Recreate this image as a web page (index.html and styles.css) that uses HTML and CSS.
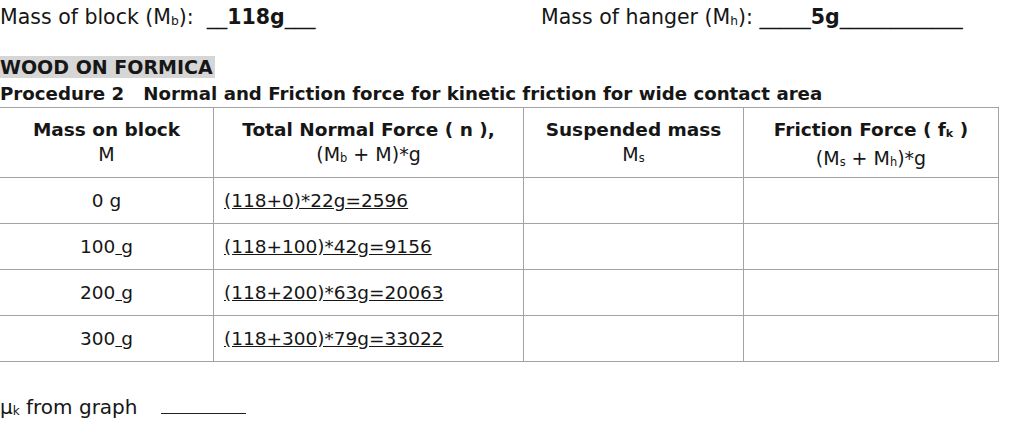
FILE: index.html
```html
<!DOCTYPE html>
<html>
<head>
<meta charset="utf-8">
<link rel="stylesheet" href="styles.css">
</head>
<body>
<div class="page">
  <div class="mass-line">
    <div class="mass-item first">Mass of block (M<span class="sub">b</span>):&nbsp; __<b>118g</b>___</div>
    <div class="mass-item">Mass of hanger (M<span class="sub">h</span>): _____<b>5g</b>____________</div>
  </div>
  <div class="heading"><span class="hl">WOOD ON FORMICA</span></div>
  <div class="procedure">Procedure 2&nbsp;&nbsp; Normal and Friction force for kinetic friction for wide contact area</div>
  <table class="data">
    <colgroup>
      <col class="c1"><col class="c2"><col class="c3"><col class="c4">
    </colgroup>
    <thead>
      <tr>
        <th><div class="t">Mass on block</div><div class="s">M</div></th>
        <th><div class="t">Total Normal Force ( n ),</div><div class="s">(M<span class="sub">b</span> + M)*g</div></th>
        <th><div class="t">Suspended mass</div><div class="s">M<span class="sub">s</span></div></th>
        <th><div class="t">Friction Force ( f<span class="sub">k</span> )</div><div class="s">(M<span class="sub">s</span> + M<span class="sub">h</span>)*g</div></th>
      </tr>
    </thead>
    <tbody>
      <tr><td class="m">0 g</td><td class="n"><u>(118+0)*22g=2596</u></td><td></td><td></td></tr>
      <tr><td class="m">100<u> g</u></td><td class="n"><u>(118+100)*42g=9156</u></td><td></td><td></td></tr>
      <tr><td class="m">200<u> g</u></td><td class="n"><u>(118+200)*63g=20063</u></td><td></td><td></td></tr>
      <tr><td class="m">300<u> g</u></td><td class="n"><u>(118+300)*79g=33022</u></td><td></td><td></td></tr>
    </tbody>
  </table>
  <div class="mu">μ<span class="sub">k</span> from graph&nbsp;&nbsp; <span class="blank"></span></div>
</div>
</body>
</html>
```

FILE: styles.css
```css
html, body {
  margin: 0;
  padding: 0;
  background: #fff;
}
.page {
  font-family: "DejaVu Sans", sans-serif;
  color: #161616;
  width: 1024px;
  height: 447px;
  overflow: hidden;
}
.sub {
  font-size: 0.6em;
  vertical-align: -0.08em;
}
.mass-line {
  display: flex;
  padding-top: 4px;
  height: 51px;
  font-size: 20.5px;
  line-height: 26px;
}
.mass-item.first {
  width: 541px;
}
.heading {
  font-weight: bold;
  font-size: 19px;
  line-height: 24px;
}
.hl {
  background: #d6d6d6;
  padding-right: 2px;
}
.procedure {
  font-weight: bold;
  font-size: 18.2px;
  line-height: 30px;
  height: 28px;
}
table.data {
  border-collapse: collapse;
  table-layout: fixed;
  width: 999px;
  margin-left: -1px;
}
col.c1 { width: 214px; }
col.c2 { width: 310px; }
col.c3 { width: 220px; }
col.c4 { width: 255px; }
table.data th, table.data td {
  border: 1px solid #a3a3a3;
  padding: 0;
}
table.data th {
  height: 70px;
  text-align: center;
  vertical-align: top;
  padding-top: 10px;
  box-sizing: border-box;
}
.t {
  font-weight: bold;
  font-size: 18.5px;
  line-height: 24px;
}
.s {
  font-weight: normal;
  font-size: 19px;
  line-height: 25px;
}
table.data td {
  height: 45px;
  font-size: 18.5px;
}
table.data td.m {
  text-align: center;
}
table.data td.n {
  padding-left: 10px;
}
.mu {
  margin-top: 32px;
  font-size: 20px;
  line-height: 26px;
}
.blank {
  display: inline-block;
  width: 85px;
  border-bottom: 1.5px solid #222;
  vertical-align: baseline;
  margin-left: 4px;
}
```
